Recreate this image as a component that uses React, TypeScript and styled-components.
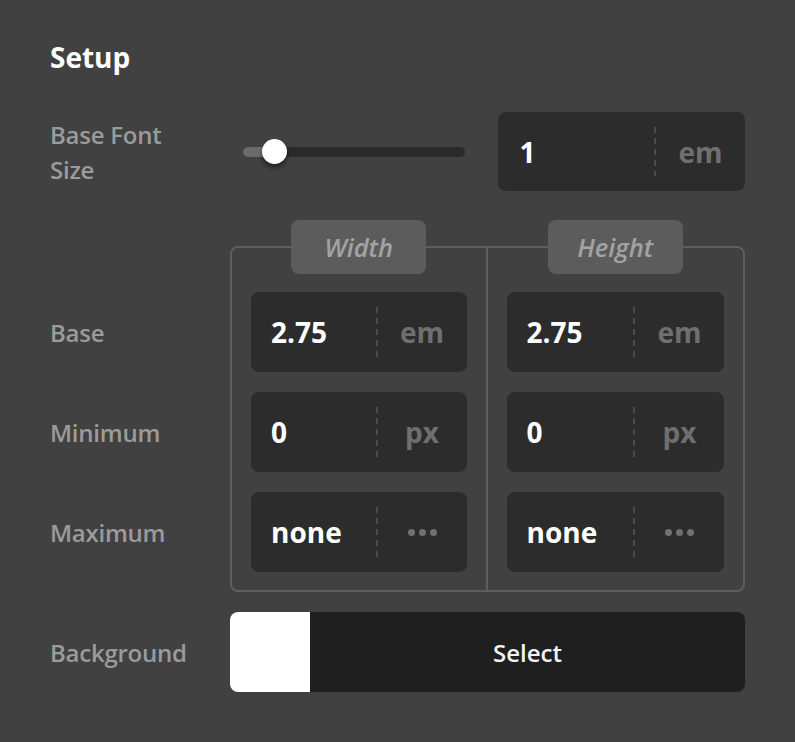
import React from "react";
import styled, { createGlobalStyle } from "styled-components";

const GlobalStyle = createGlobalStyle`
  html, body {
    margin: 0;
    padding: 0;
    background: #414141;
  }
  body {
    font-family: "Open Sans", "Noto Sans", "Liberation Sans", sans-serif;
    -webkit-font-smoothing: antialiased;
  }
`;

const Panel = styled.div`
  width: 695px;
  padding: 38px 50px 40px 50px;
  display: flex;
  flex-direction: column;
  background: #414141;
`;

const Title = styled.h2`
  margin: 0 0 36px 0;
  font-size: 28px;
  line-height: 38px;
  font-weight: 700;
  color: #ffffff;
`;

const Row = styled.div<{ $mt?: number }>`
  display: grid;
  grid-template-columns: 180px 1fr;
  align-items: center;
  margin-top: ${(p) => p.$mt ?? 0}px;
`;

const TopRow = styled(Row)`
  align-items: center;
`;

const GroupRow = styled(Row)`
  align-items: start;
`;

const Label = styled.div`
  font-size: 24px;
  line-height: 35px;
  font-weight: 600;
  letter-spacing: -0.25px;
  color: #9b9b9b;
`;

const LabelStack = styled.div`
  display: flex;
  flex-direction: column;
  gap: 20px;
  padding-top: 72px;
`;

const StackLabel = styled(Label)`
  height: 80px;
  display: flex;
  align-items: center;
`;

const Pair = styled.div`
  display: grid;
  grid-template-columns: 1fr 1fr;
  gap: 20px;
`;

const SliderWrap = styled.div`
  height: 79px;
  display: flex;
  align-items: center;
  padding: 0 13px;
`;

const Track = styled.div`
  position: relative;
  flex: 1;
  height: 10px;
  border-radius: 5px;
  background: #2a2a2a;
`;

const Fill = styled.div`
  height: 100%;
  border-radius: 5px 0 0 5px;
  background: #6b6b6b;
`;

const Thumb = styled.div`
  position: absolute;
  top: 50%;
  width: 25px;
  height: 25px;
  margin-left: -12.5px;
  margin-top: -12.5px;
  border-radius: 50%;
  background: #ffffff;
  box-shadow: 0 4px 4px rgba(0, 0, 0, 0.45);
`;

const Field = styled.div<{ $h?: number; $pad?: number }>`
  height: ${(p) => p.$h ?? 80}px;
  display: grid;
  grid-template-columns: 1fr 2px 89px;
  align-items: center;
  background: #2c2c2c;
  border-radius: 8px;
  padding-left: ${(p) => p.$pad ?? 20}px;
  box-sizing: border-box;
`;

const Value = styled.span`
  font-size: 28px;
  font-weight: 700;
  color: #ffffff;
  line-height: 1;
`;

const Divider = styled.div`
  align-self: stretch;
  margin: 15px 0;
  width: 2px;
  background-image: repeating-linear-gradient(
    to bottom,
    #4c4c4c 0,
    #4c4c4c 6px,
    transparent 6px,
    transparent 11px
  );
`;

const Unit = styled.span`
  justify-self: center;
  font-size: 28px;
  font-weight: 700;
  color: #6f6f6f;
  line-height: 1;
`;

const Dots = styled.span`
  justify-self: center;
  display: flex;
  gap: 4px;
`;

const Dot = styled.span`
  width: 7px;
  height: 7px;
  border-radius: 50%;
  background: #707070;
`;

const Frame = styled.div`
  margin-top: 26px;
  border: 2px solid #5e5e5e;
  border-radius: 8px;
  display: grid;
  grid-template-columns: 1fr 1fr;
`;

const Column = styled.div<{ $divider?: boolean }>`
  display: flex;
  flex-direction: column;
  align-items: stretch;
  padding: 0 19px 18px 19px;
  border-right: ${(p) => (p.$divider ? "2px solid #5e5e5e" : "none")};
  gap: 20px;
`;

const Legend = styled.div`
  align-self: center;
  width: 135px;
  height: 54px;
  margin-top: -28px;
  margin-bottom: -2px;
  border-radius: 8px;
  background: #5c5c5c;
  color: #a3a3a3;
  font-size: 25.5px;
  font-style: italic;
  font-weight: 600;
  display: flex;
  align-items: center;
  justify-content: center;
`;

const SelectButton = styled.button`
  height: 80px;
  border: none;
  padding: 0;
  border-radius: 8px;
  overflow: hidden;
  display: grid;
  grid-template-columns: 80px 1fr;
  background: #1f1f1f;
  cursor: pointer;
  font-family: inherit;
`;

const Swatch = styled.span<{ $color: string }>`
  background: ${(p) => p.$color};
`;

const SelectText = styled.span`
  align-self: center;
  text-align: center;
  font-size: 24px;
  font-weight: 600;
  color: #f2f2f2;
`;

type FieldProps = { value: string; unit?: string; h?: number; pad?: number };

const ValueField: React.FC<FieldProps> = ({ value, unit, h, pad }) => (
  <Field $h={h} $pad={pad}>
    <Value>{value}</Value>
    <Divider />
    {unit ? (
      <Unit>{unit}</Unit>
    ) : (
      <Dots>
        <Dot />
        <Dot />
        <Dot />
      </Dots>
    )}
  </Field>
);

const rows = [
  { label: "Base", value: "2.75", unit: "em" },
  { label: "Minimum", value: "0", unit: "px" },
  { label: "Maximum", value: "none", unit: undefined },
];

export default function App() {
  const pct = 14;
  return (
    <>
      <GlobalStyle />
      <Panel>
        <Title>Setup</Title>
        <TopRow>
          <Label>
            Base Font
            <br />
            Size
          </Label>
          <Pair>
            <SliderWrap>
              <Track>
                <Fill style={{ width: `${pct}%` }} />
                <Thumb style={{ left: `${pct}%` }} />
              </Track>
            </SliderWrap>
            <ValueField value="1" unit="em" h={79} pad={22} />
          </Pair>
        </TopRow>
        <GroupRow $mt={29}>
          <LabelStack>
            {rows.map((r) => (
              <StackLabel key={r.label}>{r.label}</StackLabel>
            ))}
          </LabelStack>
          <Frame>
            {["Width", "Height"].map((name, i) => (
              <Column key={name} $divider={i === 0}>
                <Legend>{name}</Legend>
                {rows.map((r) => (
                  <ValueField key={r.label} value={r.value} unit={r.unit} />
                ))}
              </Column>
            ))}
          </Frame>
        </GroupRow>
        <Row $mt={20}>
          <Label>Background</Label>
          <SelectButton>
            <Swatch $color="#ffffff" />
            <SelectText>Select</SelectText>
          </SelectButton>
        </Row>
      </Panel>
    </>
  );
}
